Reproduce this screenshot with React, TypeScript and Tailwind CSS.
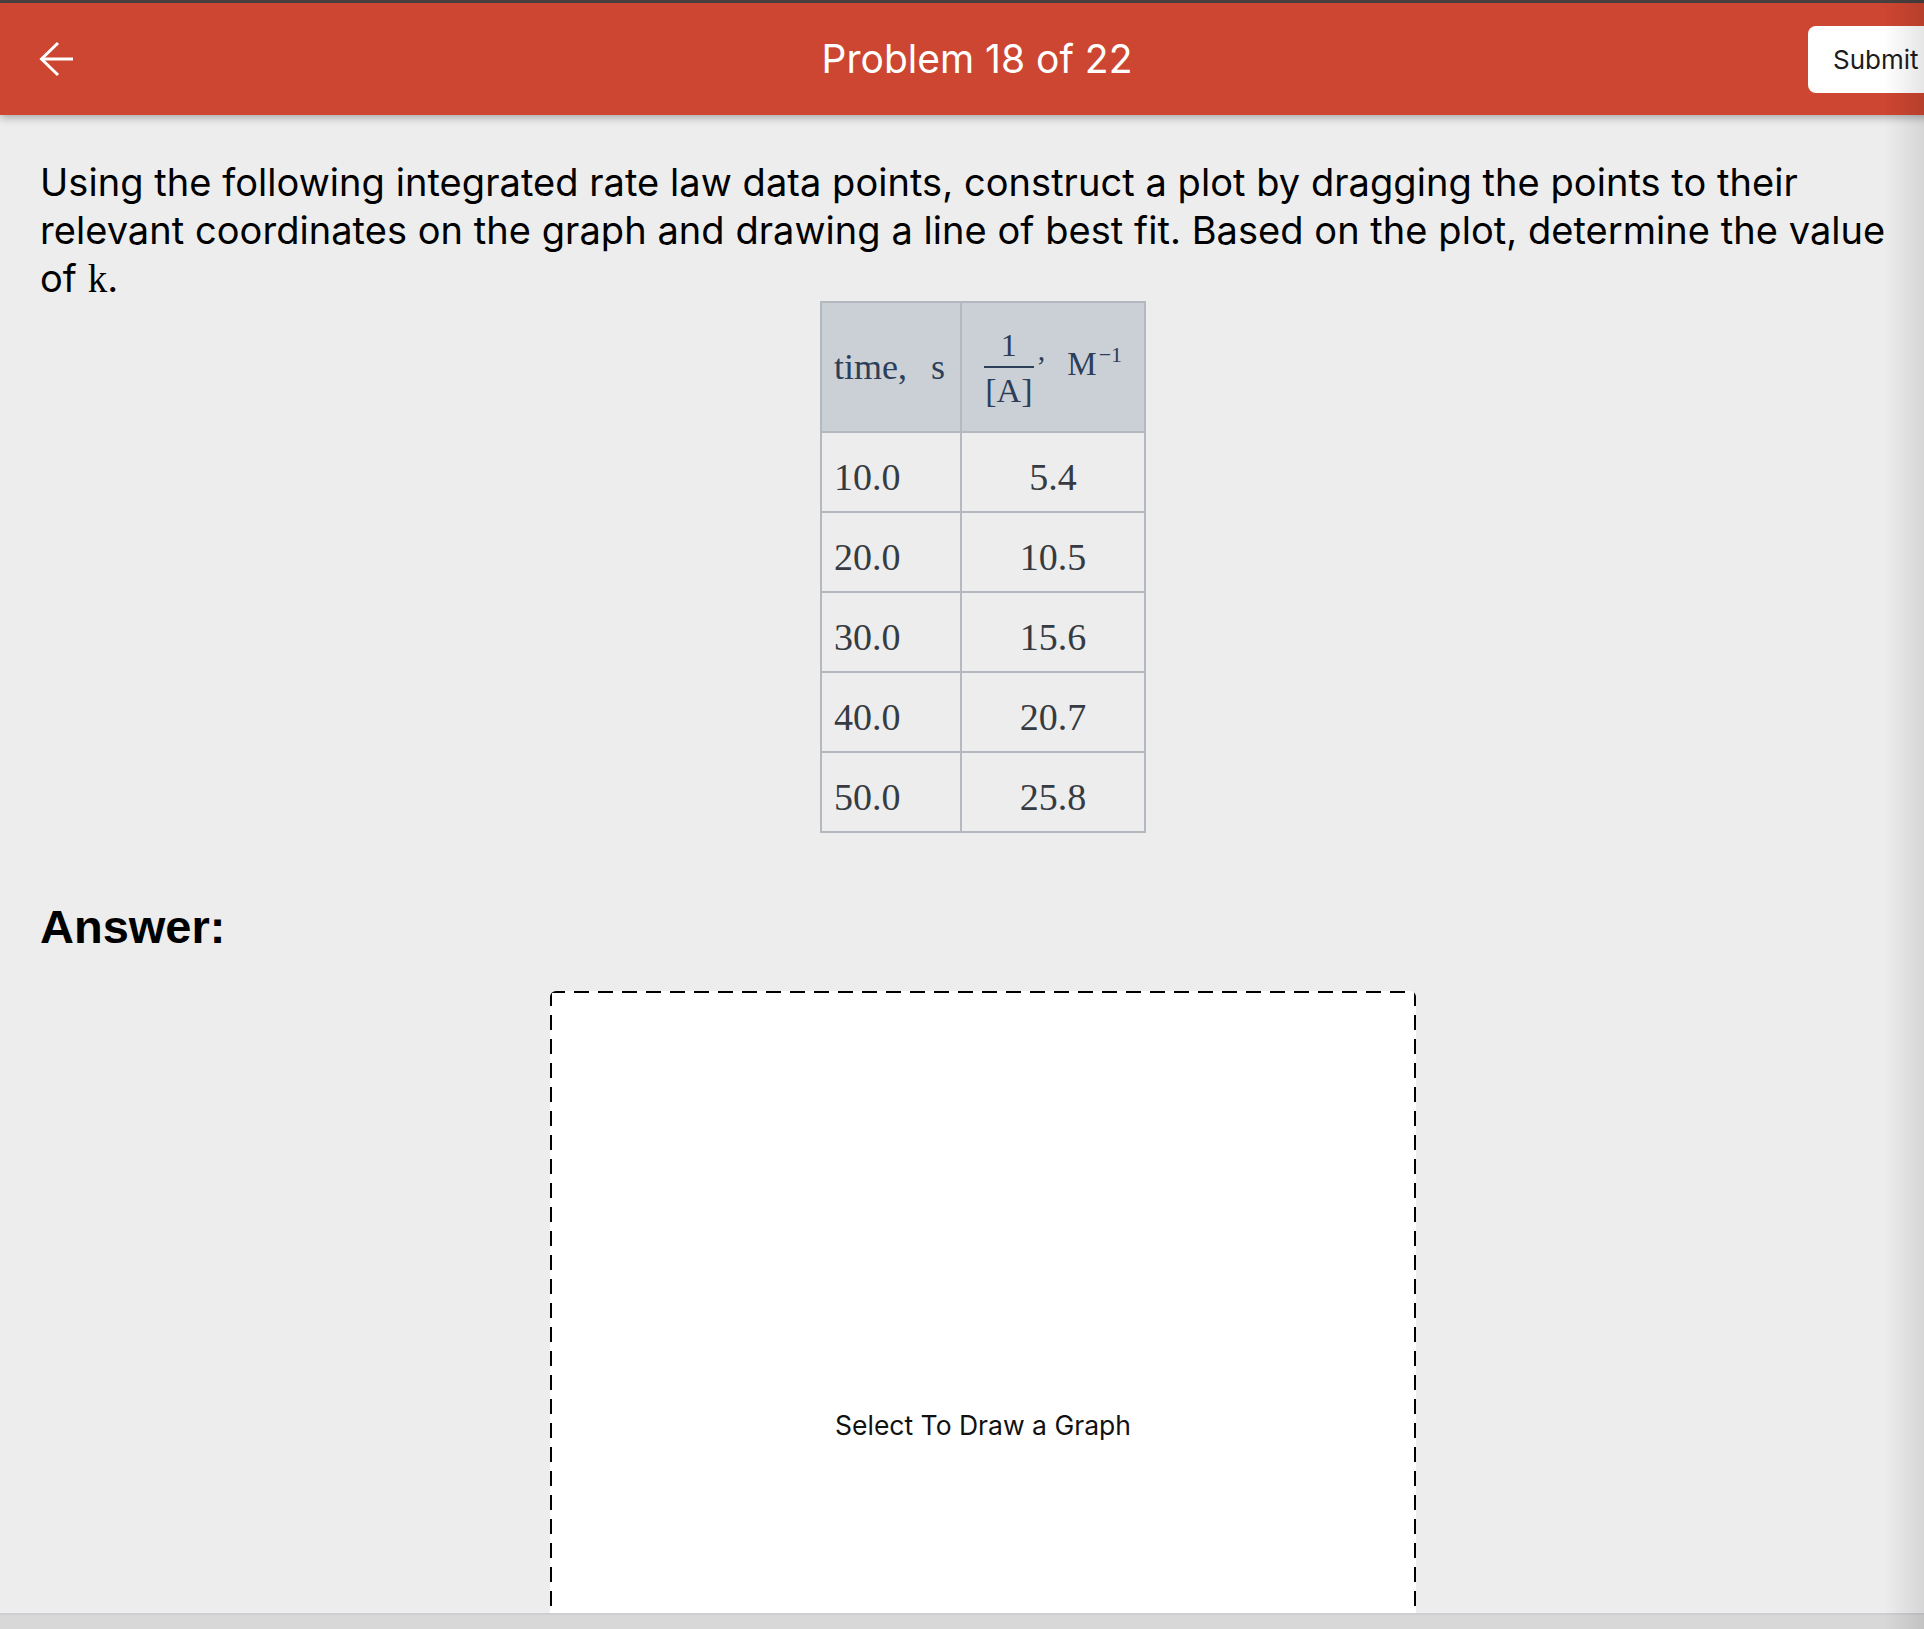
import React from "react";

const rows = [
  ["10.0", "5.4"],
  ["20.0", "10.5"],
  ["30.0", "15.6"],
  ["40.0", "20.7"],
  ["50.0", "25.8"],
];

const serif = "font-['Liberation_Serif',serif]";

function BackArrow() {
  return (
    <svg width="36" height="36" viewBox="0 0 36 36" fill="none" className="text-white">
      <path d="M35 18H3" stroke="currentColor" strokeWidth="3" />
      <path d="M20 2L3.5 18L20 34" stroke="currentColor" strokeWidth="3" strokeLinejoin="miter" />
    </svg>
  );
}

function RateTable() {
  return (
    <table className={`${serif} border-collapse border-2 border-[#b4b8bf]`}>
      <thead>
        <tr className="bg-[#cbd0d7] text-[#2d3e58]">
          <th className="h-[130px] w-[140px] whitespace-nowrap border-2 border-[#b4b8bf] pl-[12px] pr-[6px] text-left text-[36px] font-normal">
            time,<span className="ml-[24px]">s</span>
          </th>
          <th className="w-[184px] border-2 border-[#b4b8bf] px-[12px] font-normal">
            <div className="flex items-center justify-center text-[31px]">
              <span className="inline-flex flex-col items-center leading-none">
                <span className="pb-[5px] pt-[2px] text-[32px]">1</span>
                <span className="h-[2px] w-[50px] bg-[#2d3e58]" />
                <span className="pt-[6px] text-[34px]">[A]</span>
              </span>
              <span className="ml-[4px] mr-[22px] self-end pb-[36px] text-[30px]">,</span>
              <span className="pb-[4px] text-[33px]">M</span>
              <span className="-mt-[26px] ml-[2px] text-[22px]">−1</span>
            </div>
          </th>
        </tr>
      </thead>
      <tbody>
        {rows.map(([t, v]) => (
          <tr key={t} className="text-[38px] text-[#363b42]">
            <td className="h-[80px] border-2 border-[#b4b8bf] px-[12px] pt-[10px] text-left">{t}</td>
            <td className="h-[80px] border-2 border-[#b4b8bf] px-[12px] pt-[10px] text-center">{v}</td>
          </tr>
        ))}
      </tbody>
    </table>
  );
}

export default function App() {
  return (
    <div className="relative flex h-[1629px] w-[1924px] flex-col overflow-hidden bg-[#ededed] font-['Inter',sans-serif]">
      <div className="h-[3px] w-[1966px] shrink-0 bg-[#4a4242]" />
      <header className="relative z-10 flex h-[112px] w-[1966px] shrink-0 items-center bg-[#cc4631] shadow-[0_3px_8px_rgba(0,0,0,0.28)]">
        <div className="flex w-[146px] items-center pl-[38px]">
          <BackArrow />
        </div>
        <h1 className="flex-1 text-center text-[39px] font-normal text-white">Problem 18 of 22</h1>
        <div className="flex w-[158px] items-center">
          <button className="flex h-[67px] w-[160px] items-center rounded-[8px] bg-white pl-[25px] text-[26px] text-[#1c1c1c]">
            Submit
          </button>
        </div>
      </header>

      <main className="flex w-[1966px] flex-1 flex-col overflow-hidden px-[40px] pt-[43px]">
        <p className="text-[38px] leading-[48px] tracking-[0.05px] text-black">
          Using the following integrated rate law data points, construct a plot by dragging the points to their
          <br />
          relevant coordinates on the graph and drawing a line of best fit. Based on the plot, determine the value
          <br />
          of <span className={`${serif} text-[39px]`}>k</span>.
        </p>

        <div className="-mt-[2px] flex justify-center">
          <RateTable />
        </div>

        <h2 className="mt-[59px] font-['Liberation_Sans',sans-serif] text-[47px] font-bold text-black">Answer:</h2>

        <div className="mt-[28px] flex justify-center">
          <div className="flex h-[870px] w-[866px] shrink-0 items-center justify-center rounded-t-[6px] [background:repeating-linear-gradient(90deg,#000_0_15px,transparent_15px_24px)_top_left/100%_2px_no-repeat,repeating-linear-gradient(180deg,#000_0_15px,transparent_15px_24px)_top_left/2px_100%_no-repeat,repeating-linear-gradient(180deg,#000_0_15px,transparent_15px_24px)_top_right/2px_100%_no-repeat,#fff]">
            <span className="text-[26.5px] text-[#111]">Select To Draw a Graph</span>
          </div>
        </div>
      </main>

      <div className="h-[16px] w-full shrink-0 border-t-2 border-[#cdcdd2] bg-[#d8d8d8]" />
      <div className="pointer-events-none absolute inset-y-0 right-0 z-20 w-[40px] bg-gradient-to-r from-transparent to-black/10" />
    </div>
  );
}
